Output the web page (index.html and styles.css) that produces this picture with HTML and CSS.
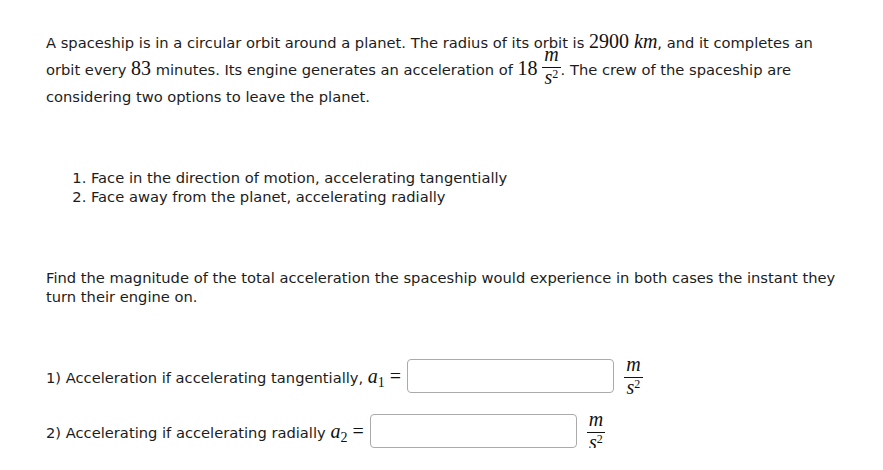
FILE: index.html
```html
<!DOCTYPE html>
<html>
<head>
<meta charset="utf-8">
<link rel="stylesheet" href="styles.css">
</head>
<body>
<div class="page">
  <p class="intro">A spaceship is in a circular orbit around a planet. The radius of its orbit is <span class="m">2900 <i>km</i></span>, and it completes an orbit every <span class="m">83</span> minutes. Its engine generates an acceleration of <span class="m">18</span> <span class="frac"><span class="num"><i>m</i></span><span class="den"><i>s</i><sup>2</sup></span></span>. The crew of the spaceship are considering two options to leave the planet.</p>
  <ol class="options">
    <li>Face in the direction of motion, accelerating tangentially</li>
    <li>Face away from the planet, accelerating radially</li>
  </ol>
  <p class="task">Find the magnitude of the total acceleration the spaceship would experience in both cases the instant they turn their engine on.</p>
  <div class="answers">
    <div class="row">
      <span class="label">1) Acceleration if accelerating tangentially, <span class="m"><i>a</i><sub>1</sub> =</span></span>
      <span class="box"></span>
      <span class="frac"><span class="num"><i>m</i></span><span class="den"><i>s</i><sup>2</sup></span></span>
    </div>
    <div class="row">
      <span class="label">2) Accelerating if accelerating radially <span class="m"><i>a</i><sub>2</sub> =</span></span>
      <span class="box"></span>
      <span class="frac"><span class="num"><i>m</i></span><span class="den"><i>s</i><sup>2</sup></span></span>
    </div>
  </div>
</div>
</body>
</html>
```
FILE: styles.css
```css
html, body { margin: 0; padding: 0; background: #fff; }
body {
  font-family: "DejaVu Sans", Verdana, sans-serif;
  font-size: 14.7px;
  color: #1c1c1c;
}
.page { padding: 30px 30px 0 46px; }
.intro { margin: 0; line-height: 26px; max-width: 775px; }
.m { font-family: "Liberation Serif", "DejaVu Serif", serif; font-size: 20px; line-height: 20px; color: #111; }
.m i { font-style: italic; }
.m sub { font-size: 14px; vertical-align: -4px; line-height: 0; }
.frac {
  display: inline-flex; flex-direction: column; align-items: center;
  vertical-align: 14px;
  font-family: "Liberation Serif", "DejaVu Serif", serif;
  font-size: 20px; line-height: 16px; color: #111;
}
.frac .num { border-bottom: 1px solid #111; padding: 0 2px 5px; }
.frac .den { padding: 1px 1px 0; }
.frac sup { font-size: 12px; line-height: 0; vertical-align: 6px; }
.intro .frac { margin: -10px 0 -1px; }
.options { margin: 58px 0 0; padding-left: 45px; line-height: 19px; }
.task { margin: 62px 0 0; line-height: 19px; }
.answers { margin-top: 53px; display: flex; flex-direction: column; gap: 21px; }
.row { display: flex; align-items: center; gap: 6px; height: 34px; }
.box {
  width: 205px; height: 32px; border: 1px solid #aaa; border-radius: 4px;
  background: #fff; margin-right: 4px;
}
.row .frac { align-self: flex-start; margin-top: -3px; }
```
